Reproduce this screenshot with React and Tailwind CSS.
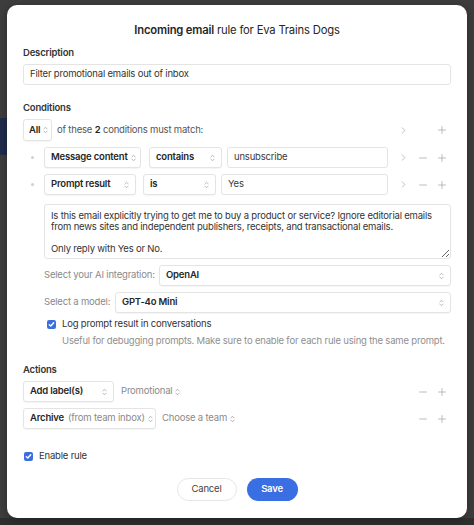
import { ChevronRight, Minus, Plus } from "lucide-react";

function UpDown({ className = "" }) {
  return (
    <svg width="5" height="8" viewBox="0 0 6 9" className={className} fill="none" stroke="currentColor" strokeWidth="1" strokeLinecap="round" strokeLinejoin="round">
      <path d="M1 3.2 3 1.2 5 3.2" />
      <path d="M1 5.8 3 7.8 5 5.8" />
    </svg>
  );
}

function Select({ children, width, extra, h = "h-[21px]" }) {
  return (
    <div
      className={`flex items-center justify-between rounded-[3px] border border-[#e4e4e4] bg-white pl-[6px] pr-[6px] shadow-[0_1px_1px_rgba(0,0,0,0.04)] ${h} ${width}`}
    >
      <span className="whitespace-nowrap font-semibold text-[#262626]">
        {children}
        {extra && <span className="ml-[4px] font-normal text-[#8a8a8a]">{extra}</span>}
      </span>
      <UpDown className="ml-[3px] shrink-0 text-[#aaa]" />
    </div>
  );
}

function Input({ children, width }) {
  return (
    <div className={`flex h-[21px] items-center rounded-[3px] border border-[#e4e4e4] bg-white px-[6px] text-[#3a3a3a] ${width}`}>
      {children}
    </div>
  );
}

function Check() {
  return (
    <div className="flex h-[9px] w-[9px] items-center justify-center rounded-[2px] bg-[#3b6fe0]">
      <svg width="7" height="7" viewBox="0 0 8 8" fill="none" stroke="white" strokeWidth="1.6" strokeLinecap="round" strokeLinejoin="round">
        <path d="M1.5 4.2 3.2 5.8 6.5 2" />
      </svg>
    </div>
  );
}

function RowControls({ chevron = true, minus = true }) {
  return (
    <div className="ml-auto flex items-center text-[#9c9c9c]">
      <div className="flex w-[19px] justify-center">{chevron && <ChevronRight size={11} strokeWidth={1.4} />}</div>
      <div className="flex w-[19px] justify-center">{minus && <Minus size={12} strokeWidth={1.3} />}</div>
      <div className="flex w-[19px] justify-center">
        <Plus size={12} strokeWidth={1.3} />
      </div>
    </div>
  );
}

function Bullet() {
  return (
    <div className="flex w-[21px] justify-center pr-[2px]">
      <div className="h-[3px] w-[3px] rounded-full bg-[#cfcfcf]" />
    </div>
  );
}

export default function App() {
  return (
    <div className="relative h-[525px] w-[474px] overflow-hidden bg-[#3d3d3d] font-['Inter',sans-serif] text-[9.5px] tracking-[-0.02em]">
      {/* page behind overlay */}
      <div className="absolute left-0 top-[118px] h-[37px] w-[8px] bg-[#1f2b4b]" />
      <div className="absolute bottom-0 left-0 h-[7px] w-full bg-[#2f2f2f]" />

      <div className="relative ml-[7px] mt-[5px] flex h-[513px] w-[460px] flex-col rounded-[10px] bg-white px-4 pt-[17px] shadow-[0_2px_8px_rgba(0,0,0,0.3)]">
        <div className="text-center text-[11.25px] leading-[16px] text-[#262626]">
          <span className="font-semibold">Incoming email</span> rule for Eva Trains Dogs
        </div>

        <div className="mt-[8px] font-semibold leading-[14px] text-[#333]">Description</div>
        <div className="mt-[4px] flex h-[21px] items-center rounded-[3px] border border-[#e4e4e4] px-[6px] text-[#333]">
          Filter promotional emails out of inbox
        </div>

        <div className="mt-[16px] font-semibold leading-[14px] text-[#333]">Conditions</div>
        <div className="mt-[4px] flex items-center">
          <Select width="w-[29px] !pl-[5px] !pr-[4px]" h="h-[22px]">All</Select>
          <span className="ml-[5px] text-[#555]">
            of these <span className="font-semibold text-[#262626]">2</span> conditions must match:
          </span>
          <RowControls minus={false} />
        </div>

        <div className="mt-[6px] flex items-center">
          <Bullet />
          <Select width="w-[97px]">Message content</Select>
          <div className="w-[8px]" />
          <Select width="w-[73px]">contains</Select>
          <div className="w-[5px]" />
          <Input width="w-[161px]">unsubscribe</Input>
          <RowControls />
        </div>

        <div className="mt-[6px] flex items-center">
          <Bullet />
          <Select width="w-[92px]">Prompt result</Select>
          <div className="w-[7px]" />
          <Select width="w-[73px]">is</Select>
          <div className="w-[5px]" />
          <Input width="w-[167px]">Yes</Input>
          <RowControls />
        </div>

        <div className="ml-[21px] flex flex-col">
          <textarea
            readOnly
            className="mt-[9px] h-[55px] w-full resize-y rounded-[3px] border border-[#e4e4e4] px-[6px] pt-[5px] leading-[11px] text-[#333] outline-none"
            defaultValue={
              "Is this email explicitly trying to get me to buy a product or service? Ignore editorial emails from news sites and independent publishers, receipts, and transactional emails.\n\nOnly reply with Yes or No."
            }
          />

          <div className="mt-[6px] flex items-center">
            <span className="w-[115px] text-[#8a8a8a]">Select your AI integration:</span>
            <Select width="flex-1">OpenAI</Select>
          </div>
          <div className="mt-[6px] flex items-center">
            <span className="w-[71px] text-[#8a8a8a]">Select a model:</span>
            <Select width="flex-1">GPT-4o Mini</Select>
          </div>

          <div className="mt-[4px] flex items-center leading-[14px]">
            <div className="ml-[3px] w-[15px]">
              <Check />
            </div>
            <span className="text-[#333]">Log prompt result in conversations</span>
          </div>
          <div className="mt-[3px] pl-[18px] leading-[14px] text-[#8f8f8f]">
            Useful for debugging prompts. Make sure to enable for each rule using the same prompt.
          </div>
        </div>

        <div className="mt-[15px] font-semibold leading-[14px] text-[#333]">Actions</div>
        <div className="mt-[4px] flex items-center">
          <Select width="w-[91px]">Add label(s)</Select>
          <span className="ml-[7px] flex items-center text-[#8a8a8a]">
            Promotional <UpDown className="ml-[3px] text-[#a0a0a0]" />
          </span>
          <RowControls chevron={false} />
        </div>
        <div className="mt-[6px] flex items-center">
          <Select width="w-[133px]" extra="(from team inbox)">Archive</Select>
          <span className="ml-[6px] flex items-center text-[#8a8a8a]">
            Choose a team <UpDown className="ml-[3px] text-[#a0a0a0]" />
          </span>
          <RowControls chevron={false} />
        </div>

        <div className="mt-[20px] flex items-center leading-[14px]">
          <div className="ml-[1px] w-[15px]">
            <Check />
          </div>
          <span className="text-[#333]">Enable rule</span>
        </div>

        <div className="mt-[15px] flex justify-center gap-[10px]">
          <button className="h-[23px] w-[60px] rounded-full border border-[#e6e6e6] bg-white text-[#444]">
            Cancel
          </button>
          <button className="h-[23px] w-[51px] rounded-full bg-[#3a6ee3] font-semibold text-white">
            Save
          </button>
        </div>
      </div>
    </div>
  );
}
